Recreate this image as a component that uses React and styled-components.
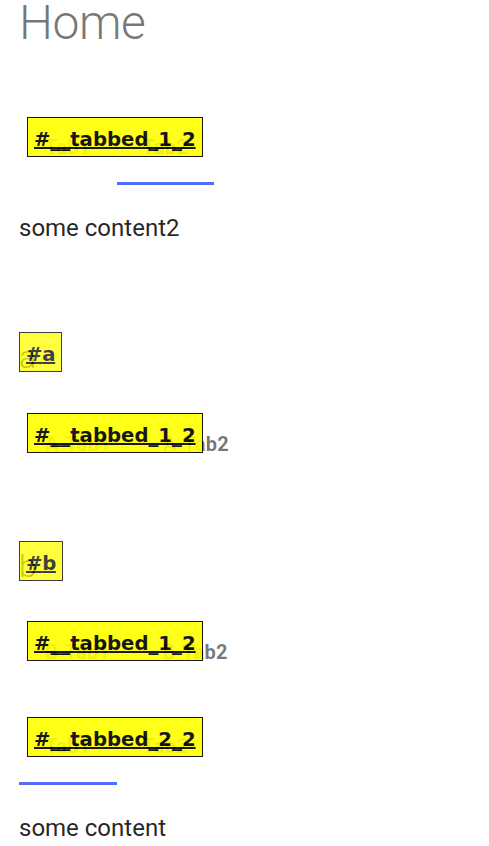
import React from "react";
import styled, { createGlobalStyle } from "styled-components";

const Global = createGlobalStyle`
  html, body { margin: 0; padding: 0; background: #fff; }
  body {
    font-family: Roboto, "Noto Sans", sans-serif;
    color: rgba(0, 0, 0, 0.87);
    -webkit-font-smoothing: antialiased;
  }
`;

const Page = styled.main`
  padding: 0 19px;
`;

const Title = styled.h1`
  margin: -1px 0 0;
  font-family: Roboto, sans-serif;
  font-size: 48px;
  font-weight: 300;
  line-height: 48px;
  letter-spacing: -0.01em;
  color: rgba(0, 0, 0, 0.54);
`;

const Heading = styled.h2`
  position: relative;
  margin: ${(p) => p.$mt}px 0 0;
  font-family: Roboto, sans-serif;
  font-size: 32px;
  font-weight: 300;
  line-height: 40px;
  letter-spacing: -0.01em;
  color: rgba(0, 0, 0, 0.87);
`;

const TabSet = styled.div`
  position: relative;
  margin-top: ${(p) => p.$mt}px;
`;

const TabLabels = styled.div`
  display: flex;
`;

const TabLabel = styled.span`
  display: block;
  padding: 15px 26px 23.5px;
  font-family: Roboto, sans-serif;
  font-size: 20px;
  font-weight: 700;
  line-height: 24px;
  letter-spacing: 0.3px;
  word-spacing: 2px;
  white-space: nowrap;
  color: ${(p) => (p.$active ? "#4051b5" : "rgba(0, 0, 0, 0.54)")};
  border-bottom: 3px solid ${(p) => (p.$active ? "#526cfe" : "transparent")};
`;

const TabContent = styled.p`
  margin: 23.6px 0 0;
  font-size: 24px;
  line-height: 1.6;
  color: rgba(0, 0, 0, 0.87);
`;

const AnchorTag = styled.a`
  position: absolute;
  top: ${(p) => p.$top}px;
  left: ${(p) => p.$left}px;
  z-index: 2;
  padding: 10px 6px 4px;
  background: #ffff00;
  border: 1px solid #000;
  opacity: ${(p) => p.$opacity};
  font-family: "DejaVu Sans", "Open Sans", sans-serif;
  font-size: 19.7px;
  font-weight: 700;
  line-height: 24px;
  white-space: nowrap;
  color: #000;
  text-decoration: underline;
  text-decoration-thickness: 2px;
  text-underline-offset: 1px;
`;

function Tabs({ mt, boxTop, tag, labels, active, content }) {
  return (
    <TabSet $mt={mt}>
      <AnchorTag href={tag} $top={boxTop} $left={8} $opacity={0.9}>
        {tag}
      </AnchorTag>
      <TabLabels>
        {labels.map((l, i) => (
          <TabLabel key={l} $active={i === active}>
            {l}
          </TabLabel>
        ))}
      </TabLabels>
      {content && <TabContent>{content}</TabContent>}
    </TabSet>
  );
}

function Section({ mt, id }) {
  return (
    <Heading $mt={mt} id={id}>
      <AnchorTag href={`#${id}`} $top={-5} $left={0} $opacity={0.75}>
        #{id}
      </AnchorTag>
      {id}
    </Heading>
  );
}

export default function App() {
  return (
    <>
      <Global />
      <Page>
        <Title>Home</Title>
        <Tabs
          mt={72.5}
          boxTop={-2.5}
          tag="#__tabbed_1_2"
          labels={["Tab1", "Tab2"]}
          active={1}
          content="some content2"
        />
        <Section mt={90} id="a" />
        <Tabs
          mt={40}
          boxTop={-4}
          tag="#__tabbed_1_2"
          labels={["A Tab1", "A Tab2"]}
          active={-1}
        />
        <Section mt={63.5} id="b" />
        <Tabs
          mt={39}
          boxTop={-4}
          tag="#__tabbed_1_2"
          labels={["B Tab1", "B Tab2"]}
          active={-1}
        />
        <Tabs
          mt={29}
          boxTop={-2.5}
          tag="#__tabbed_2_2"
          labels={["Tab1", "Tab2"]}
          active={0}
          content="some content"
        />
      </Page>
    </>
  );
}
